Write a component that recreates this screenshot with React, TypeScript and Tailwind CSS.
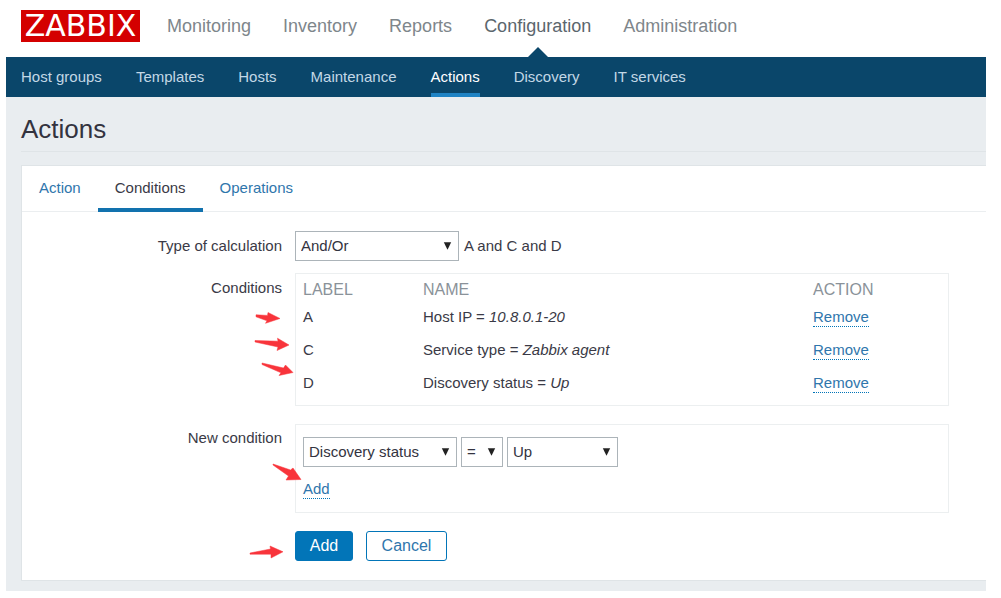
import type { ReactNode } from "react";

const mainMenu = ["Monitoring", "Inventory", "Reports", "Configuration", "Administration"];
const subMenu = ["Host groups", "Templates", "Hosts", "Maintenance", "Actions", "Discovery", "IT services"];
const tabs = ["Action", "Conditions", "Operations"];

const conditions = [
  { label: "A", name: "Host IP", value: "10.8.0.1-20" },
  { label: "C", name: "Service type", value: "Zabbix agent" },
  { label: "D", name: "Discovery status", value: "Up" },
];

function Select({ id, label, options, width }: { id: string; label?: string; options: string[]; width: string }) {
  return (
    <span className={`relative inline-flex ${width}`}>
      <select
        id={id}
        aria-label={label}
        className="h-[30px] w-full appearance-none border border-[#acb4b9] bg-white pl-[5px] text-[15px] leading-5 text-[#333340] outline-none"
      >
        {options.map((o) => (
          <option key={o}>{o}</option>
        ))}
      </select>
      <svg
        className="pointer-events-none absolute top-[11px] right-[7px] h-2 w-[9px]"
        viewBox="0 0 9 8"
        aria-hidden="true"
      >
        <path d="M0.8 0.3H8.2L4.5 7.8Z" fill="#222" />
      </svg>
    </span>
  );
}

function DottedButton({ children }: { children: ReactNode }) {
  return (
    <button type="button" className="border-b border-dotted border-[#0275b8] text-[15px] leading-[18px] text-[#2f76ac]">
      {children}
    </button>
  );
}

function Arrow({ points, position }: { points: string; position: string }) {
  return (
    <svg className={`pointer-events-none absolute h-[18px] w-9 ${position}`} viewBox="0 0 36 18" aria-hidden="true">
      <polygon points={points} fill="#f8343b" stroke="#f8343b" strokeWidth="0.5" strokeLinejoin="round" />
    </svg>
  );
}

export default function App() {
  return (
    <div className="bg-white pr-[15px] pb-[7px] pl-[6px] font-['Liberation_Sans',Arial,sans-serif] text-[15px] leading-5 text-[#3a3a46]">
      <header>
        <div className="flex h-[57px] items-start pt-[10px] pl-[15px]">
          <a
            href="#home"
            className="flex h-8 w-[119px] items-center justify-center bg-[#d40000] font-['DejaVu_Sans',Verdana,sans-serif] text-[30px] leading-8 text-white"
          >
            ZABBIX
          </a>
          <nav className="ml-[27px] flex gap-8 text-[18px] leading-8">
            {mainMenu.map((item) => (
              <a
                key={item}
                href="#main"
                className={item === "Configuration" ? "relative h-[47px] text-[#5b666d]" : "h-[47px] text-[#7e868b]"}
              >
                {item}
                {item === "Configuration" && (
                  <svg className="absolute bottom-0 left-1/2 h-[10px] w-5 -translate-x-1/2" viewBox="0 0 20 10" aria-hidden="true">
                    <path d="M0 10L10 0L20 10Z" fill="#0a466a" />
                  </svg>
                )}
              </a>
            ))}
          </nav>
        </div>
        <nav className="flex h-10 gap-[34px] bg-[#0a466a] pl-[15px] text-[15px] leading-10">
          {subMenu.map((item) => (
            <a
              key={item}
              href="#sub"
              className={
                item === "Actions"
                  ? "border-b-4 border-[#1f83c4] font-normal text-white"
                  : "border-b-4 border-transparent text-[#c3d8e6]"
              }
            >
              {item}
            </a>
          ))}
        </nav>
      </header>

      <main className="bg-[#e9edf0] pb-[10px] pl-[15px]">
        <h1 className="h-[55px] border-b border-[#dfe4e7] pt-4 text-[26px] leading-8 text-[#33333f]">Actions</h1>

        <section className="relative mt-[13px] border-t border-b border-l border-[#dfe4e7] bg-white pb-[19px]">
          <div className="flex border-b border-[#ebeef0]">
            {tabs.map((tab) => (
              <a
                key={tab}
                href="#tab"
                className={
                  tab === "Conditions"
                    ? "-mb-px border-b-4 border-[#1272ae] px-[17px] pt-3 pb-[10px] text-[#3a3a46]"
                    : "px-[17px] pt-3 pb-[13px] text-[#2f76ac]"
                }
              >
                {tab}
              </a>
            ))}
          </div>

          <form className="grid grid-cols-[260px_1fr] gap-x-[13px] pt-[19px] pr-[37px]">
            <label htmlFor="calculation" className="pt-[5px] text-right">
              Type of calculation
            </label>
            <div className="flex items-center gap-[5px]">
              <Select id="calculation" options={["And/Or", "And", "Or", "Custom expression"]} width="w-[164px]" />
              <span>A and C and D</span>
            </div>

            <div className="mt-3 pt-[5px] text-right">Conditions</div>
            <div className="mt-3 border border-[#eceff0] px-[7px] pt-[6px] pb-[6px]">
              <table className="w-full table-fixed text-left">
                <thead>
                  <tr className="h-5 text-[16px] text-[#8a9299]">
                    <th className="w-[120px] p-0 font-normal">LABEL</th>
                    <th className="p-0 font-normal">NAME</th>
                    <th className="w-32 p-0 font-normal">ACTION</th>
                  </tr>
                </thead>
                <tbody>
                  {conditions.map((c) => (
                    <tr key={c.label} className="h-[33px]">
                      <td className="p-0">{c.label}</td>
                      <td className="p-0">
                        {c.name} = <em>{c.value}</em>
                      </td>
                      <td className="p-0">
                        <DottedButton>Remove</DottedButton>
                      </td>
                    </tr>
                  ))}
                </tbody>
              </table>
            </div>

            <div className="mt-[18px] pt-1 text-right">New condition</div>
            <div className="mt-[18px] border border-[#eceff0] px-[7px] pt-3 pb-[13px]">
              <div className="flex gap-1">
                <Select id="type" label="Condition type" options={["Discovery status", "Host IP", "Service type"]} width="w-[154px]" />
                <Select id="operator" label="Operator" options={["="]} width="w-[42px]" />
                <Select id="value" label="Value" options={["Up", "Down", "Discovered", "Lost"]} width="w-[111px]" />
              </div>
              <div className="mt-[13px] flex">
                <DottedButton>Add</DottedButton>
              </div>
            </div>

            <div className="col-start-2 mt-[18px] flex gap-[13px] text-[16px]">
              <button type="button" className="h-[30px] w-[58px] rounded-[3px] border border-[#0275b8] bg-[#0275b8] text-white">
                Add
              </button>
              <button type="button" className="h-[30px] w-[81px] rounded-[3px] border border-[#0275b8] bg-white text-[#2f76ac]">
                Cancel
              </button>
            </div>
          </form>

          {/* Callout arrows drawn over the form */}
          <Arrow position="top-[145px] left-[233px]" points="1,3.8 12.5,4.4 13,1.5 25,7.5 10.5,12.3 12,9.8 1,5.8" />
          <Arrow position="top-[170px] left-[232px]" points="1,4.5 24,5.2 23.5,2.2 35,9 23,14.5 24,11 1,6" />
          <Arrow position="top-[195px] left-[239px]" points="1,2 22.5,7 24.5,4 32,11.5 18,14.5 20,11.8 1,3.5" />
          <Arrow position="top-[297px] left-[250px]" points="1,1 18.5,7 21,5 29,16.5 14,17 16.5,13 1,2" />
          <Arrow position="top-[377px] left-[227px]" points="1,10 21.5,6 21,3 34,8.8 22,15 22,11.2 1,11.2" />
        </section>
      </main>
    </div>
  );
}
